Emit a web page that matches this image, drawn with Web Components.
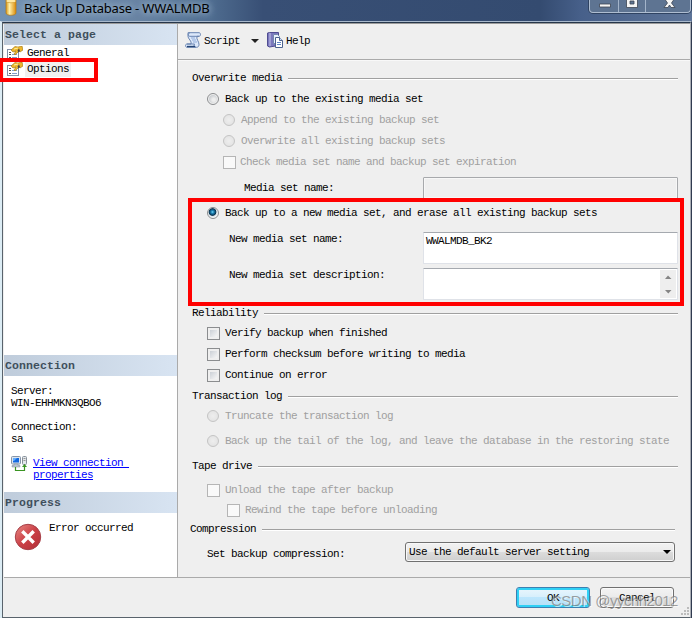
<!DOCTYPE html>
<html lang="en">
<head>
<meta charset="utf-8">
<title>Back Up Database - WWALMDB</title>
<style>
html,body{margin:0;width:692px;height:618px;overflow:hidden}
body{font:11px/12px "Liberation Mono",monospace;letter-spacing:-.6px;color:#000;background:#efefef}
</style>
</head>
<body>
<backup-dialog></backup-dialog>
<script>
const define = (name, html, setup) => customElements.define(name, class extends HTMLElement {
  constructor() {
    super();
    const t = document.createElement('template');
    t.innerHTML = html;
    this.attachShadow({mode: 'open'}).append(t.content.cloneNode(true));
    if (setup) this.setup = setup;
  }
  connectedCallback() { if (this.setup) this.setup(this.shadowRoot); }
});

const icons = {
  db: `<svg width="16" height="16" viewBox="0 0 16 16"><defs><linearGradient id="g"><stop offset="0" stop-color="#d99a1c"/><stop offset=".35" stop-color="#fff0a8"/><stop offset="1" stop-color="#d98a08"/></linearGradient></defs><path d="M3 0v13c0 3 10 3 10 0V0z" fill="url(#g)" stroke="#b87a10" stroke-width=".7"/><ellipse cx="8" cy="1" rx="5" ry="1.800" fill="#ffe9a0" stroke="#c99020" stroke-width=".6"/></svg>`,
  page: `<svg width="16" height="14" viewBox="0 0 16 14"><rect x=".5" y="3.500" width="11" height="10" fill="#fff" stroke="#8290a8"/><path d="M2 6.500h2M2 8.500h2M2 11.500h2" stroke="#555"/><path d="M5 8.500h5M5 11.500h5" stroke="#7f9cc8"/><path d="M4 4L8 .5 11 1l4-1 1 4-3 2-1-1-4 4-1-1 2-3-3 1z" fill="#edb62c" stroke="#9c7412" stroke-width=".6"/><path d="M10.500 4.500l1.500-2 1 2.500-1.500 1.500z" fill="#444"/><path d="M7 3l4-1" stroke="#fff1a0"/></svg>`,
  script: `<svg width="16" height="16" viewBox="0 0 16 16"><path d="M3 .7h11c2 0 2 3.600 0 3.600h-2c-1 3 2 5 2 8 0 2-1 3-2.500 3H2C0 15.300 0 12 2 12h4C7 9 3 7 3 4z" fill="#dce8fa" stroke="#6883b0"/><path d="M2 12h7.500c-1 1.500-.3 3 1.500 3.200M5 .8c-2 0-2.500 3.500 0 3.500h9" fill="none" stroke="#6883b0"/><path d="M6 6h4M7 8h4M8 10h4" stroke="#8fabd8"/><path d="M2 14.500h8" stroke="#244475" stroke-width="1.300"/></svg>`,
  help: `<svg width="16" height="16" viewBox="0 0 16 16"><path d="M.5 1l2-.5h9v13l-9 1.500-2-1z" fill="#7b78bd" stroke="#504d91"/><path d="M3 1v13" stroke="#c5c3ea"/><path d="M6.500 2.500h4l2 2v7h-6z" fill="#e9f0fb" stroke="#7587ae"/><path d="M8.500 5.500h4l3 3v7h-7z" fill="#fff" stroke="#4d628e"/><path d="M12.500 5.500v3h3" fill="#cfdcf3" stroke="#4d628e"/><path d="M10 10.500h4M10 12.500h4" stroke="#5f85c6"/></svg>`,
  link: `<svg width="16" height="16" viewBox="0 0 16 16"><rect x=".5" y=".5" width="9" height="7.500" rx="1" fill="#dbe4ee" stroke="#8594a8"/><rect x="2" y="2" width="6" height="4.500" fill="#1368df"/><path d="M2 2h4L3 5H2z" fill="#62adff"/><path d="M3 8h4v1.500h2V11H1V9.500h2z" fill="#bac5d2" stroke="#7a8898" stroke-width=".5"/><rect x="11.500" y=".5" width="4" height="8" rx="1" fill="#e3e7eb" stroke="#87909a"/><path d="M12.500 2.500h2M12.500 4.500h2" stroke="#999"/><path d="M4.500 11v3.500h9V10" fill="none" stroke="#3a9422" stroke-width="1.200"/><path d="M11 11l2.500-3 2.500 3z" fill="#3a9422"/></svg>`,
  error: `<svg width="28" height="28" viewBox="0 0 28 28"><defs><linearGradient id="r" x1="0" y1="0" x2="1" y2="1"><stop offset="0" stop-color="#e88b86"/><stop offset=".5" stop-color="#cb4046"/><stop offset="1" stop-color="#b02e37"/></linearGradient></defs><circle cx="14" cy="14" r="12.700" fill="url(#r)" stroke="#a74048"/><path d="M9.500 9.500l9 9m0-9l-9 9" stroke="#fff" stroke-width="3.400" stroke-linecap="square"/></svg>`
};

define('ui-icon', `<style>:host{display:block;flex:none}svg{display:block}</style><div></div>`, function (r) {
  r.querySelector('div').innerHTML = icons[this.getAttribute('name')];
});

define('win-titlebar', `<style>
:host{display:flex;height:21px;box-sizing:border-box;padding-left:3px;background:linear-gradient(90deg,#7292b3 0,#6883a2 20%,#506e91 30%,#384f75 38%,#344b70 78%,#47608a 84%,#5d7498 100%);overflow:hidden}
.t{font:13px/16px "Noto Sans",sans-serif;letter-spacing:-.18px;height:16px;margin:0 0 0 5px;white-space:pre;text-shadow:0 0 7px #a8bfd4,0 0 9px #9fb7ce}
.b{margin-left:auto;display:flex;height:13px;box-sizing:border-box;border:1px solid #aebdd1;border-top:0;border-radius:0 0 4px 4px;width:102px;background:#5e7492;margin-right:1px;box-shadow:0 0 0 1px #2f4362}
.b svg{display:block}
</style><ui-icon name="db"></ui-icon><span class="t"><slot></slot></span>
<div class="b"><svg width="100" height="12" viewBox="0 0 100 12"><path d="M28.500 0v12M55.500 0v12" stroke="#a3b4ca"/><g fill="#f5f5f5" stroke="#3d4552" stroke-width=".8"><path d="M9.500 4h11v3h-11z"/><path fill-rule="evenodd" d="M36.500-2h11v9.500h-11zM40 1h4v3h-4z"/><path d="M74-2h4l1.500 2L81-2h4l-3.500 5L85 7.500h-4L79.500 5 78 7.500h-4L77.500 3z"/></g></svg></div>`);

define('side-header', `<style>:host{display:block;height:21px;line-height:21px;padding-left:1px;font-weight:bold;font-size:11.500px;letter-spacing:.09px;color:#3f4f5c;background:linear-gradient(90deg,#bfccdb,#d8e4f2)}</style><slot></slot>`);

define('nav-item', `<style>:host{display:flex;height:16px;padding-left:3px;gap:2px;align-items:center}span{padding:1px 2px;line-height:13px;height:13px}:host([active]) span{background:#f0f0f0}</style><ui-icon name="page"></ui-icon><span><slot></slot></span>`);

define('side-panel', `<style>
:host{display:flex;flex-direction:column;width:173px;background:#fff;border-right:1px solid #aaa;height:553px}
.nav{height:310px}.conn{height:116px;box-sizing:border-box;padding:9px 0 0 7px}.row{display:flex;gap:6px;padding-top:12px}
p{margin:0 0 12px}a{color:#00f;text-decoration:underline;white-space:pre}.prog{display:flex;padding:10px 0 0 10px;gap:7px}.prog span{margin-top:-1px}.row ui-icon{margin-top:-1px}
</style>
<side-header>Select a page</side-header>
<div class="nav"><nav-item>General</nav-item><nav-item active>Options</nav-item></div>
<side-header>Connection</side-header>
<div class="conn"><p>Server:<br>WIN-EHHMKN3QBO6</p><p style="margin:0">Connection:<br>sa</p><div class="row"><ui-icon name="link"></ui-icon><a>View connection <br>properties</a></div></div>
<side-header>Progress</side-header>
<div class="prog"><ui-icon name="error"></ui-icon><span>Error occurred</span></div>`);

define('tool-bar', `<style>:host{display:flex;height:35px;border-bottom:1px solid #aaa;align-items:center;padding-left:7px;box-shadow:0 1px #f8f8f8}span{margin:-1px 0 0 3px}ui-icon{margin-top:-3px}i{border:4px solid transparent;border-top-color:#222;border-bottom:0;margin:-2px 8px 0 11px}</style>
<ui-icon name="script"></ui-icon><span>Script</span><i></i><ui-icon name="help"></ui-icon><span>Help</span>`);

define('group-header', `<style>:host{display:flex;align-items:center;padding:0 12px 0 14px;gap:6px;white-space:nowrap}i{flex:1;height:1px;background:#a0a0a0;border-bottom:1px solid #fff;margin-top:2px}</style><slot></slot><i></i>`);

define('option-row', `<style>
:host{display:flex;align-items:center;white-space:nowrap;gap:5px;padding-left:29px;box-sizing:border-box}
:host([disabled]){color:#a0a0a0}
i{box-sizing:border-box;flex:none;width:13px;height:13px;border:1px solid #8b8d8f;background:linear-gradient(135deg,#cbd0d6,#f6f6f6) content-box #fff;padding:2px}
:host([radio]) i{width:12px;height:12px;border-radius:50%;padding:1px;margin-right:1px;background:radial-gradient(circle at 60% 60%,#eee 20%,#c4c8cc 80%) content-box #f4f4f4}
:host([disabled]) i{border-color:#b5b5b5;background:#f9f9f9;padding:0}
:host([radio][disabled]) i{background:radial-gradient(#eee,#e0e0e0);border-color:#c4c4c4}
:host([checked]) i{background:radial-gradient(circle at 45% 40%,#77d8f5 0,#1b81b4 18%,#0b334f 42%,#dbe4e9 52%,#f8f8f8 70%)}
</style><i></i><span><slot></slot></span>`);

define('text-field', `<style>
:host{display:flex;box-sizing:border-box;width:255px;height:32px;border:1px solid #dfe2e8;border-top-color:#a5a9af;background:#fff;padding:2px 1px 0 2px;align-items:flex-start;border-radius:1px}
:host([disabled]){height:22px;background:#efefef;border-color:#a7a9ac;box-shadow:inset 0 0 0 1px #f7f7f7}
svg{display:none;margin:-1px 0 0 auto}:host([scroll]) svg{display:block}
</style><slot></slot><svg width="16" height="28"><path fill="#eee" d="M0 0h16v28H0z"/><path d="M5 9l3-3.500L11.500 9zM5 20h6.500l-3.200 3.500z" fill="#858585"/></svg>`);

define('field-row', `<style>:host{display:grid;grid-template-columns:1fr 255px;padding-right:12px;box-sizing:border-box;white-space:nowrap}</style><div><slot name="label"></slot></div><slot></slot>`);

define('drop-down', `<style>:host{display:flex;box-sizing:border-box;width:270px;height:20px;border:1px solid #707070;border-radius:3px;box-shadow:inset 0 0 0 1px #f8f8f8;background:linear-gradient(#f2f2f2,#ebebeb 48%,#dcdcdc 50%,#cfcfcf);align-items:center;padding:0 3px}i{margin-left:auto;border:4px solid transparent;border-top-color:#000;border-bottom:0}</style><slot></slot><i></i>`);

define('push-button', `<style>:host{display:flex;box-sizing:border-box;width:74px;height:21px;border:1px solid #707070;border-radius:3px;box-shadow:inset 0 0 0 1px #fafafa;background:linear-gradient(#f3f3f3,#ebebeb 48%,#dedede 50%,#d0d0d0);align-items:center;justify-content:center}:host([primary]){border-color:#3c7fb1;box-shadow:inset 0 0 0 2px #2fd0f5;background:linear-gradient(#eaf6fd,#d7effc 48%,#bde6fd 50%,#b7dff5)}</style><slot></slot>`);

define('options-form', `<style>:host{display:flex;flex-direction:column;padding-top:8px;height:509px}</style>
<group-header style="height:20px">Overwrite media</group-header>
<option-row radio style="height:22px">Back up to the existing media set</option-row>
<option-row radio disabled style="height:20px;padding-left:45px">Append to the existing backup set</option-row>
<option-row radio disabled style="height:22px;padding-left:45px">Overwrite all existing backup sets</option-row>
<option-row disabled style="height:20px;padding-left:45px;gap:4px">Check media set name and backup set expiration</option-row>
<field-row style="height:30px;padding-top:5px"><div slot="label" style="padding:5px 0 0 66px">Media set name:</div><text-field disabled></text-field></field-row>
<option-row radio checked style="height:22px">Back up to a new media set, and erase all existing backup sets</option-row>
<field-row style="height:44px;padding-top:8px"><div slot="label" style="padding:1px 0 0 51px">New media set name:</div><text-field>WWALMDB_BK2</text-field></field-row>
<field-row style="height:36px"><div slot="label" style="padding:1px 0 0 51px">New media set description:</div><text-field scroll></text-field></field-row>
<group-header style="height:18px">Reliability</group-header>
<option-row style="height:22px">Verify backup when finished</option-row>
<option-row style="height:20px">Perform checksum before writing to media</option-row>
<option-row style="height:22px">Continue on error</option-row>
<group-header style="height:20px">Transaction log</group-header>
<option-row radio disabled style="height:20px">Truncate the transaction log</option-row>
<option-row radio disabled style="height:30px">Back up the tail of the log, and leave the database in the restoring state</option-row>
<group-header style="height:20px">Tape drive</group-header>
<option-row disabled style="height:28px">Unload the tape after backup</option-row>
<option-row disabled style="height:12px;padding-left:49px">Rewind the tape before unloading</option-row>
<group-header style="height:26px;padding:0 15px 0 12px">Compression</group-header>
<div style="display:flex;justify-content:space-between;padding:0 15px 0 29px"><span style="padding-top:6px">Set backup compression:</span><drop-down>Use the default server setting</drop-down></div>`);

define('backup-dialog', `<style>
:host{display:flex;flex-direction:column;width:692px;height:618px;position:relative;background:#efefef}
.frame{display:flex;flex-direction:column;height:597px;box-sizing:border-box;border-top:1px solid #a9b9cc;border-left:2px solid #dcecf4;border-right:1px solid #303b50}
.in{flex:1;border:1px solid #59636c;border-right-color:#a9adb4;border-top:1px solid #26364a;box-shadow:inset 0 1px #9a9a9a;padding:1px 0 0 1px;display:flex;flex-direction:column}
.main{display:flex;height:553px;border-bottom:1px solid #aaa}
.right{flex:1}
.foot{display:flex;justify-content:flex-end;gap:10px;padding:9px 16px 0 0}
.mark{position:absolute;box-sizing:border-box;border:4px solid #f00}
.wm{position:absolute;left:551px;top:592px;font:15px/18px "Liberation Sans",sans-serif;letter-spacing:-.5px;color:rgba(125,125,125,.72);white-space:nowrap;text-shadow:1px 1px #ffffffa0}
.grip{position:absolute;left:681px;top:607px}
</style>
<win-titlebar>Back Up Database - WWALMDB</win-titlebar>
<div class="frame"><div class="in"><div class="main"><side-panel></side-panel><div class="right"><tool-bar></tool-bar><options-form></options-form></div></div>
<div class="foot"><push-button primary>OK</push-button><push-button>Cancel</push-button></div></div></div>
<div class="mark" style="left:-1px;top:58px;width:99px;height:24px"></div>
<div class="mark" style="left:188px;top:198px;width:496px;height:108px"></div>
<svg class="grip" width="9" height="9"><path d="M6 0h2v2H6zM3 3h2v2H3zM6 3h2v2H6zM0 6h2v2H0zM3 6h2v2H3zM6 6h2v2H6z" fill="#bcbcbc"/></svg>
<div class="wm">CSDN @yychh2012</div>`);
</script>
</body>
</html>
